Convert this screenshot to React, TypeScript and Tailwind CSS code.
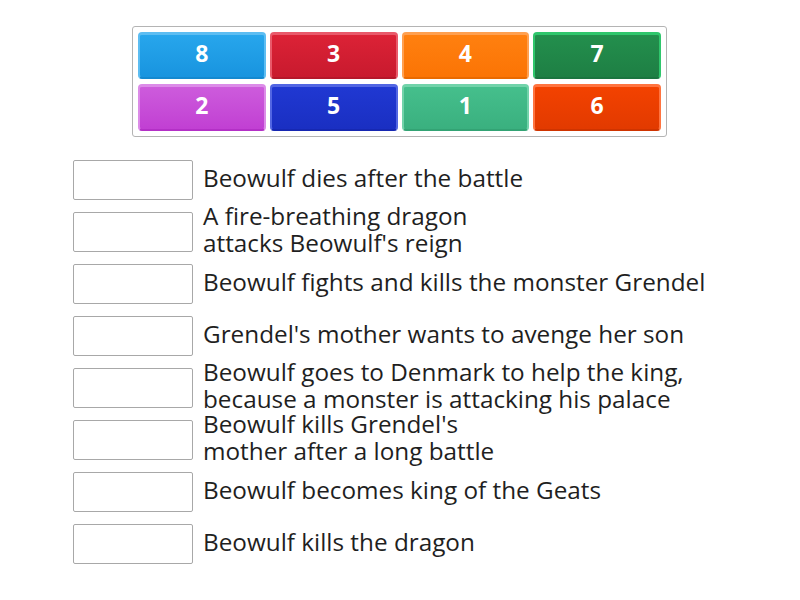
import React from "react";

type Tile = { n: string; cls: string };

const tiles: Tile[] = [
  { n: "8", cls: "bg-gradient-to-b from-[#27a6ec] to-[#1894df] border-[#5cbdf2] border-b-[#1489d0]" },
  { n: "3", cls: "bg-gradient-to-b from-[#dc2236] to-[#c81a2e] border-[#e9596a] border-b-[#b5172a]" },
  { n: "4", cls: "bg-gradient-to-b from-[#ff800f] to-[#fb7405] border-[#ffa050] border-b-[#e96a00]" },
  { n: "7", cls: "bg-gradient-to-b from-[#238f4d] to-[#1e7f44] border-[#2fc66c] border-b-[#1b7540]" },
  { n: "2", cls: "bg-gradient-to-b from-[#cd5bdc] to-[#c13fd3] border-[#dc8ce8] border-b-[#b330c6]" },
  { n: "5", cls: "bg-gradient-to-b from-[#2038d2] to-[#1a2fc2] border-[#5266e3] border-b-[#1628b2]" },
  { n: "1", cls: "bg-gradient-to-b from-[#45bf8c] to-[#3ab07f] border-[#72d3aa] border-b-[#33a374]" },
  { n: "6", cls: "bg-gradient-to-b from-[#f34200] to-[#e23a00] border-[#ff7440] border-b-[#cf3400]" },
];

const items: string[][] = [
  ["Beowulf dies after the battle"],
  ["A fire-breathing dragon", "attacks Beowulf's reign"],
  ["Beowulf fights and kills the monster Grendel"],
  ["Grendel's mother wants to avenge her son"],
  ["Beowulf goes to Denmark to help the king,", "because a monster is attacking his palace"],
  ["Beowulf kills Grendel's", "mother after a long battle"],
  ["Beowulf becomes king of the Geats"],
  ["Beowulf kills the dragon"],
];

export default function App() {
  return (
    <main className="h-[600px] w-[800px] bg-white font-['Open_Sans',sans-serif] text-[#1f1f1f]">
      <div className="pl-[132px] pt-[26px]">
        <div className="grid w-[535px] grid-cols-4 gap-x-[4px] gap-y-[5px] rounded-[3px] border border-[#b4b4b4] p-[5px]">
          {tiles.map((t) => (
            <div
              key={t.n}
              className={`flex h-[47px] items-center justify-center rounded-[4px] border-x-2 border-t-[3px] border-b-2 pb-[5px] text-[23px] font-bold text-white ${t.cls}`}
            >
              {t.n}
            </div>
          ))}
        </div>
      </div>

      <div className="mt-[23px] flex flex-col gap-[12px] pl-[73px]">
        {items.map((lines, i) => (
          <div key={i} className="flex h-[40px] items-center">
            <div className="h-[40px] w-[120px] shrink-0 rounded-[2px] border border-[#a8a8a8] bg-white" />
            <div className={`pl-[10px] text-[24.3px] leading-[27px] ${lines.length > 1 ? "-mt-[7px]" : "-mt-[6px]"}`}>
              {lines.map((l) => (
                <div key={l} className="whitespace-nowrap">{l}</div>
              ))}
            </div>
          </div>
        ))}
      </div>
    </main>
  );
}
